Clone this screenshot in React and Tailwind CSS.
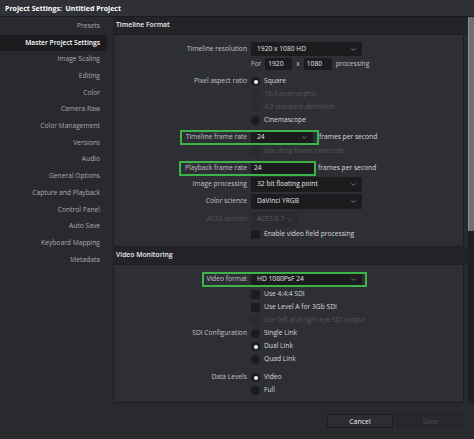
import React from 'react';
import { ChevronDown } from 'lucide-react';

const sideItems = [
    'Presets', 'Master Project Settings', 'Image Scaling', 'Editing', 'Color', 'Camera Raw',
    'Color Management', 'Versions', 'Audio', 'General Options', 'Capture and Playback',
    'Control Panel', 'Auto Save', 'Keyboard Mapping', 'Metadata',
];

const Dropdown = ({ value, width, disabled }) => (
    <div
        className={`h-full flex items-center justify-between pl-[6px] pr-[5px] rounded-[1px] ${disabled ? 'bg-[#2a2b30] text-[#5c5d62]' : 'bg-[#1c1c1f] text-[#e4e4e6]'}`}
        style={{ width }}
    >
        <span>{value}</span>
        <ChevronDown size={7} strokeWidth={2} className={disabled ? 'text-[#5c5d62]' : 'text-[#b0b0b4]'} />
    </div>
);

const Radio = ({ label, checked, disabled }) => (
    <div className="flex items-center gap-[4px] h-full">
        <span className={`w-[9px] h-[9px] rounded-full flex items-center justify-center ${disabled ? 'bg-[#2a2b30]' : 'bg-[#1c1c1f]'}`}>
            {checked && <span className="w-[4px] h-[4px] rounded-full bg-white" />}
        </span>
        <span className={disabled ? 'text-[#55565b]' : 'text-[#d8d8db]'}>{label}</span>
    </div>
);

const Check = ({ label, disabled }) => (
    <div className="flex items-center gap-[4px] h-full">
        <span className={`w-[9px] h-[9px] rounded-[1px] ${disabled ? 'bg-[#2a2b30]' : 'bg-[#1c1c1f]'}`} />
        <span className={disabled ? 'text-[#55565b]' : 'text-[#d8d8db]'}>{label}</span>
    </div>
);

// one form line: right-aligned label column, then the control
const Row = ({ label, dim, h = 'h-[13px]', className = '', children }) => (
    <div className={`relative flex items-center ${h} ${className}`}>
        <div className={`w-[133px] shrink-0 text-right ${dim ? 'text-[#55565b]' : 'text-[#c2c2c6]'}`}>{label}</div>
        <div className="ml-[4px] h-full flex items-center gap-[4px]">{children}</div>
    </div>
);

// green annotation frame lying over a row
const Mark = ({ left, width }) => (
    <div
        className="absolute top-0 bottom-0 border-[2px] border-[#3db44a] pointer-events-none"
        style={{ left, width }}
    />
);

const Header = ({ title }) => (
    <div className="h-[17px] bg-[#232327] flex items-center pl-[3px] font-semibold text-[#ececee] text-[6.8px]">
        {title}
    </div>
);

const App = () => {
    return (
        <div
            className="w-[474px] h-[439px] bg-[#29292e] flex flex-col overflow-hidden text-[6.7px] leading-none"
            style={{ fontFamily: '"Open Sans", "Liberation Sans", sans-serif' }}
        >
            <div className="h-[17px] shrink-0 bg-[#303136] border-b border-[#1b1b1e] flex items-center pl-[5px] text-[7px] font-bold text-white">
                Project Settings:&nbsp; Untitled Project
            </div>

            <div className="flex flex-1 min-h-0">
                <div className="w-[113px] shrink-0 pt-[1px]">
                    {sideItems.map((item, i) => (
                        <div
                            key={item}
                            className={`w-[107px] h-[16.7px] flex items-center justify-end pr-[7px] ${i === 1 ? 'bg-[#1c1c1f] text-white font-semibold' : 'text-[#ababaf]'}`}
                        >
                            {item}
                        </div>
                    ))}
                </div>

                <div className="flex-1 flex flex-col min-w-0">
                    <div className="h-[386px] flex">
                        <div className="flex-1 flex flex-col">
                            <Header title="Timeline Format" />
                            <div className="h-[213px] mr-[4px] bg-[#2e2f34] border border-[#1e1e22] pt-[7px]">
                                <Row label="Timeline resolution" h="h-[14px]">
                                    <Dropdown value="1920 x 1080 HD" width={111} />
                                </Row>
                                <Row label="" h="h-[14px]" className="mt-[1px]">
                                    <span className="text-[#c2c2c6]">For</span>
                                    <div className="w-[27px] h-[12px] bg-[#1c1c1f] text-[#e4e4e6] flex items-center pl-[3px]">1920</div>
                                    <span className="text-[#c2c2c6]">x</span>
                                    <div className="w-[28px] h-[12px] bg-[#1c1c1f] text-[#e4e4e6] flex items-center pl-[3px]">1080</div>
                                    <span className="text-[#c2c2c6]">processing</span>
                                </Row>
                                <Row label="Pixel aspect ratio" className="mt-[4px]">
                                    <Radio label="Square" checked />
                                </Row>
                                <Row label=""><Radio label="16:9 anamorphic" disabled /></Row>
                                <Row label=""><Radio label="4:3 standard definition" disabled /></Row>
                                <Row label=""><Radio label="Cinemascope" /></Row>
                                <Row label="Timeline frame rate" h="h-[15px]" className="mt-[3px]">
                                    <Dropdown value="24" width={62} />
                                    <span className="text-[#d8d8db] ml-[2px]">frames per second</span>
                                    <Mark left={66} width={139} />
                                </Row>
                                <Row label="" h="h-[12px]"><Check label="Use drop frame timecode" disabled /></Row>
                                <Row label="Playback frame rate" h="h-[15px]" className="mt-[4px]">
                                    <div className="w-[63px] h-full bg-[#1c1c1f] text-[#e4e4e6] flex items-center pl-[3px]">24</div>
                                    <span className="text-[#d8d8db]">frames per second</span>
                                    <Mark left={65} width={137} />
                                </Row>
                                <Row label="Image processing" h="h-[15px]" className="mt-[1px]">
                                    <Dropdown value="32 bit floating point" width={111} />
                                </Row>
                                <Row label="Color science" h="h-[15px]" className="mt-[2px]">
                                    <Dropdown value="DaVinci YRGB" width={111} />
                                </Row>
                                <Row label="ACES version" dim h="h-[15px]" className="mt-[3px]">
                                    <Dropdown value="ACES 0.7" width={47} disabled />
                                </Row>
                                <Row label="" className="mt-[1px]"><Check label="Enable video field processing" /></Row>
                            </div>

                            <Header title="Video Monitoring" />
                            <div className="h-[139px] mr-[4px] bg-[#2e2f34] border border-[#1e1e22] pt-[7px]">
                                <Row label="Video format" h="h-[15px]">
                                    <Dropdown value="HD 1080PsF 24" width={111} />
                                    <Mark left={88} width={165} />
                                </Row>
                                <Row label="" className="mt-[1px]"><Check label="Use 4:4:4 SDI" /></Row>
                                <Row label=""><Check label="Use Level A for 3Gb SDI" /></Row>
                                <Row label=""><Check label="Use left and right eye SDI output" disabled /></Row>
                                <Row label="SDI Configuration"><Radio label="Single Link" /></Row>
                                <Row label=""><Radio label="Dual Link" checked /></Row>
                                <Row label=""><Radio label="Quad Link" /></Row>
                                <Row label="Data Levels" className="mt-[5px]"><Radio label="Video" checked /></Row>
                                <Row label=""><Radio label="Full" /></Row>
                            </div>
                        </div>

                        <div className="w-[6px] shrink-0 bg-[#1f1f22] flex flex-col">
                            <div className="h-[214px] bg-[#6f7075] border-l border-[#8a8b90] rounded-[1px]" />
                        </div>
                    </div>

                    <div className="flex-1 flex justify-end items-start gap-[4px] pt-[11px] pr-[11px]">
                        <button className="w-[66px] h-[14px] bg-[#2c2d32] border border-[#1c1c1f] rounded-[1px] text-[#ececee] text-[7px]">
                            Cancel
                        </button>
                        <button className="w-[66px] h-[14px] bg-[#27282c] border border-[#222226] rounded-[1px] text-[#4f5055] text-[7px]">
                            Save
                        </button>
                    </div>
                </div>
            </div>
        </div>
    );
};

export default App;
